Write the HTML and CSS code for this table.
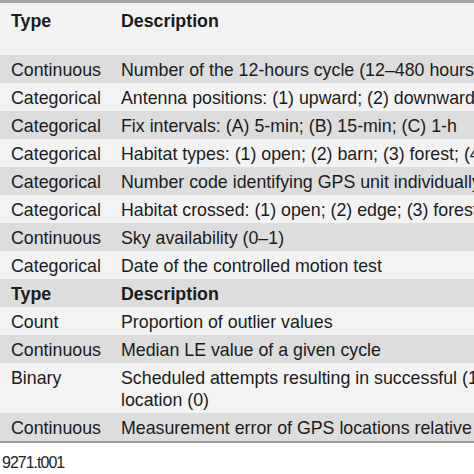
FILE: index.html
```html
<!DOCTYPE html>
<html>
<head>
<meta charset="utf-8">
<link rel="stylesheet" href="styles.css">
</head>
<body>
<div class="wrap">
<table class="tbl">
  <thead>
    <tr class="head"><th class="c1">Type</th><th class="c2">Description</th></tr>
  </thead>
  <tbody>
    <tr class="g"><td class="c1">Continuous</td><td class="c2">Number of the 12-hours cycle (12–480 hours)</td></tr>
    <tr class="l"><td class="c1">Categorical</td><td class="c2">Antenna positions: (1) upward; (2) downward</td></tr>
    <tr class="g"><td class="c1">Categorical</td><td class="c2">Fix intervals: (A) 5-min; (B) 15-min; (C) 1-h</td></tr>
    <tr class="l"><td class="c1">Categorical</td><td class="c2">Habitat types: (1) open; (2) barn; (3) forest; (4) mixed</td></tr>
    <tr class="g"><td class="c1">Categorical</td><td class="c2">Number code identifying GPS unit individually</td></tr>
    <tr class="l"><td class="c1">Categorical</td><td class="c2">Habitat crossed: (1) open; (2) edge; (3) forest</td></tr>
    <tr class="g"><td class="c1">Continuous</td><td class="c2">Sky availability (0–1)</td></tr>
    <tr class="l"><td class="c1">Categorical</td><td class="c2">Date of the controlled motion test</td></tr>
    <tr class="g sub"><th class="c1">Type</th><th class="c2">Description</th></tr>
    <tr class="l"><td class="c1">Count</td><td class="c2">Proportion of outlier values</td></tr>
    <tr class="g"><td class="c1">Continuous</td><td class="c2">Median LE value of a given cycle</td></tr>
    <tr class="l"><td class="c1">Binary</td><td class="c2">Scheduled attempts resulting in successful (1) or failed<br>location (0)</td></tr>
    <tr class="g last"><td class="c1">Continuous</td><td class="c2">Measurement error of GPS locations relative to true position</td></tr>
  </tbody>
</table>
</div>
<div class="foot">9271.t001</div>
</body>
</html>
```
FILE: styles.css
```css
html, body {
  margin: 0;
  padding: 0;
  background: #ffffff;
  overflow: hidden;
}
body {
  width: 474px;
  height: 474px;
  font-family: "Liberation Sans", Arial, Helvetica, sans-serif;
  color: #1b1b1b;
}
.wrap {
  width: 474px;
  overflow: hidden;
}
.tbl {
  border-collapse: collapse;
  border-top: 3px solid #a3a3a3;
  border-bottom: 2px solid #9c9c9c;
  width: 760px;
  font-size: 17.8px;
  line-height: 22px;
  white-space: nowrap;
}
.tbl th, .tbl td {
  text-align: left;
  vertical-align: top;
  padding: 4px 0 2px 0;
}
.tbl th {
  font-weight: bold;
}
.c1 {
  width: 99px;
  padding-left: 11px !important;
}
.c2 {
  padding-left: 11px !important;
}
.head {
  background: #f2f2f2;
}
.head th {
  padding-top: 7px;
  padding-bottom: 23px;
}
.g {
  background: #dddddd;
}
.l {
  background: #f3f3f3;
}
.foot {
  margin-top: 10px;
  padding-left: 2px;
  font-family: "Liberation Sans", Arial, sans-serif;
  font-size: 16px;
  letter-spacing: -1px;
  line-height: 20px;
  color: #222222;
}
```
